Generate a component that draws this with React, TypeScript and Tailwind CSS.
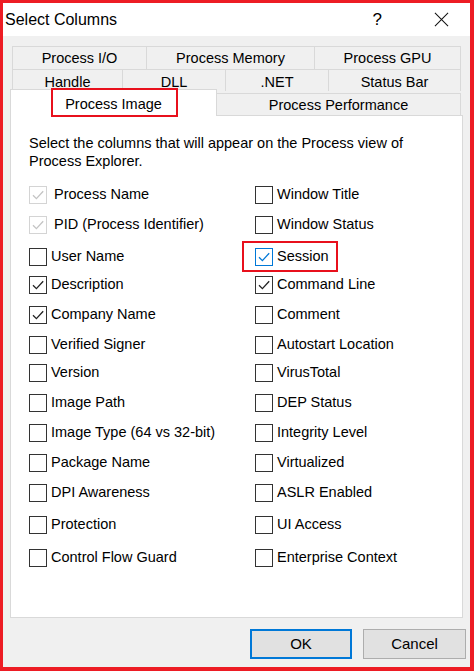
import React from "react";

type State = "off" | "on" | "disabled" | "focus";
type Item = { label: string; state?: State };

const rows: { h: string; left: Item; right: Item }[] = [
  { h: "h-[30px]", left: { label: "Process Name", state: "disabled" }, right: { label: "Window Title" } },
  { h: "h-[32px]", left: { label: "PID (Process Identifier)", state: "disabled" }, right: { label: "Window Status" } },
  { h: "h-[28px]", left: { label: "User Name" }, right: { label: "Session", state: "focus" } },
  { h: "h-[30px]", left: { label: "Description", state: "on" }, right: { label: "Command Line", state: "on" } },
  { h: "h-[30px]", left: { label: "Company Name", state: "on" }, right: { label: "Comment" } },
  { h: "h-[28px]", left: { label: "Verified Signer" }, right: { label: "Autostart Location" } },
  { h: "h-[30px]", left: { label: "Version" }, right: { label: "VirusTotal" } },
  { h: "h-[30px]", left: { label: "Image Path" }, right: { label: "DEP Status" } },
  { h: "h-[30px]", left: { label: "Image Type (64 vs 32-bit)" }, right: { label: "Integrity Level" } },
  { h: "h-[30px]", left: { label: "Package Name" }, right: { label: "Virtualized" } },
  { h: "h-[32px]", left: { label: "DPI Awareness" }, right: { label: "ASLR Enabled" } },
  { h: "h-[33px]", left: { label: "Protection" }, right: { label: "UI Access" } },
  { h: "h-[20px]", left: { label: "Control Flow Guard" }, right: { label: "Enterprise Context" } },
];

function Check({ color }: { color: string }) {
  return (
    <svg width="16" height="16" viewBox="0 0 16 16" className="block">
      <path d="M3 8.2 L6.4 11.6 L13.2 4.2" fill="none" stroke={color} strokeWidth="1.3" />
    </svg>
  );
}

function Box({ state = "off" }: { state?: State }) {
  if (state === "disabled") {
    return (
      <div className="w-[18px] h-[18px] border border-[#d4d4d4] bg-white flex items-center justify-center shrink-0">
        <Check color="#c4c4c4" />
      </div>
    );
  }
  if (state === "focus") {
    return (
      <div className="w-[18px] h-[18px] border border-[#0078d7] bg-white flex items-center justify-center shrink-0">
        <Check color="#0078d7" />
      </div>
    );
  }
  return (
    <div className="w-[18px] h-[18px] border border-[#333333] bg-white flex items-center justify-center shrink-0">
      {state === "on" ? <Check color="#222222" /> : null}
    </div>
  );
}

function Cell({ item }: { item: Item }) {
  return (
    <div className="flex items-center h-[20px]">
      <Box state={item.state} />
      <span className={item.state === "disabled" ? "ml-[7px] whitespace-nowrap" : "ml-[4px] whitespace-nowrap"}>
        {item.label}
      </span>
    </div>
  );
}

const tabText = "text-[14.5px] text-black flex justify-center whitespace-nowrap";

export default function App() {
  return (
    <div
      className="w-[474px] h-[671px] flex flex-col border-[#ed1c24] border-t-[3px] border-l-[3px] border-r-4 border-b-4 bg-[#f0f0f0] relative"
      style={{ fontFamily: '"Liberation Sans", Arial, sans-serif' }}
    >
      {/* Title bar */}
      <div className="h-[33px] bg-white flex items-center shrink-0">
        <span className="ml-[2px] text-[16px] text-black">Select Columns</span>
        <span className="ml-auto text-[17px] text-black mr-[52px]">?</span>
        <svg width="15" height="15" viewBox="0 0 16 16" className="mr-[21px]">
          <path d="M1 1 L15 15 M15 1 L1 15" stroke="#111" strokeWidth="1.1" />
        </svg>
      </div>

      {/* Body */}
      <div className="flex-1 flex flex-col pt-[10px] px-[7px]">
        {/* Tab row 1 */}
        <div className="flex h-[23px] mx-[2px]">
          <div className={`${tabText} items-center pt-[1px] w-[135px] border border-b-0 border-[#d9d9d9]`}>Process I/O</div>
          <div className={`${tabText} items-center pt-[1px] w-[169px] -ml-px border border-b-0 border-[#d9d9d9]`}>Process Memory</div>
          <div className={`${tabText} items-center pt-[1px] flex-1 -ml-px border border-b-0 border-[#d9d9d9]`}>Process GPU</div>
        </div>
        {/* Tab row 2 */}
        <div className="flex h-[22px] mx-[2px]">
          <div className={`${tabText} items-start pt-[2px] w-[111px] border border-b-0 border-[#d9d9d9]`}>Handle</div>
          <div className={`${tabText} items-start pt-[2px] w-[104px] -ml-px border border-b-0 border-[#d9d9d9]`}>DLL</div>
          <div className={`${tabText} items-start pt-[2px] w-[104px] -ml-px border border-b-0 border-[#d9d9d9]`}>.NET</div>
          <div className={`${tabText} items-start pt-[2px] flex-1 -ml-px border border-b-0 border-[#d9d9d9]`}>Status Bar</div>
        </div>
        {/* Tab row 3 */}
        <div className="flex h-[24px] items-end">
          <div className={`${tabText} items-center pt-[3px] relative z-10 w-[207px] h-[27px] -mb-px bg-white border border-b-0 border-[#d9d9d9]`}>
            Process Image
          </div>
          <div className={`${tabText} items-center pt-[2px] flex-1 h-[22px] mr-[2px] border border-b-0 border-l-0 border-[#d9d9d9]`}>
            Process Performance
          </div>
        </div>

        {/* Panel */}
        <div className="h-[503px] bg-white border border-[#d9d9d9] pl-[18px] pt-[18px] text-[14.5px] text-black">
          <p className="leading-[18px] w-[420px]">
            Select the columns that will appear on the Process view of Process Explorer.
          </p>
          <div className="mt-[15px] flex flex-col">
            {rows.map((r) => (
              <div key={r.left.label} className={`flex ${r.h}`}>
                <div className="w-[226px]">
                  <Cell item={r.left} />
                </div>
                <div>
                  <Cell item={r.right} />
                </div>
              </div>
            ))}
          </div>
        </div>

        {/* Buttons */}
        <div className="flex justify-end gap-[11px] mt-[11px] -mr-[3px]">
          <button className="w-[102px] h-[30px] bg-[#e1e1e1] border-2 border-[#0078d7] text-[15px] text-black">OK</button>
          <button className="w-[103px] h-[30px] bg-[#e1e1e1] border border-[#adadad] text-[15px] text-black">Cancel</button>
        </div>
      </div>

      {/* Annotation highlights */}
      <div className="absolute left-[48px] top-[85px] w-[127px] h-[29px] border-2 border-[#e8101c] z-20 pointer-events-none" />
      <div className="absolute left-[239px] top-[238px] w-[96px] h-[31px] border-2 border-[#e8101c] z-20 pointer-events-none" />
    </div>
  );
}
